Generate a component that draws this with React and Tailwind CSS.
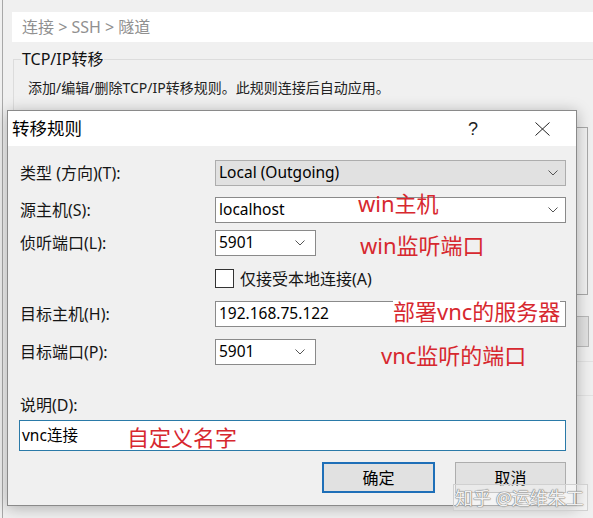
import React from "react";

function Chevron() {
  return (
    <svg width="10" height="6" viewBox="0 0 10 6" className="shrink-0">
      <path d="M0.5 0.5 L5 5 L9.5 0.5" fill="none" stroke="#555" strokeWidth="1" />
    </svg>
  );
}

function Row({ label, children, className = "" }) {
  return (
    <div className={`flex items-center ${className}`}>
      <div className="w-[207px] pl-[12px] text-[16px] text-[#151515] leading-none">{label}</div>
      {children}
    </div>
  );
}

export default function App() {
  return (
    <div className="relative w-[593px] h-[518px] overflow-hidden bg-[#f0f0f0] font-['Noto_Sans','Noto_Sans_CJK_SC',sans-serif]">
      {/* background window */}
      <div className="flex h-full">
        <div className="w-[2px]" />
        <div className="w-px bg-[#a8a8a8]" />
        <div className="flex-1 flex flex-col pt-[12px]">
          <div className="ml-[9px] h-[30px] bg-white flex items-center pl-[10px] text-[16px] text-[#909090]">
            连接 &gt; SSH &gt; 隧道
          </div>
          <fieldset className="ml-[10px] mt-[9px] border border-r-0 border-b-0 border-[#dcdcdc] pl-[14px] pb-0 min-w-0">
            <legend className="ml-[-7px] px-[1px] text-[16px] text-[#111] leading-none">TCP/IP转移</legend>
            <div className="mt-[14px] text-[14px] text-[#222] leading-none">添加/编辑/删除TCP/IP转移规则。此规则连接后自动应用。</div>
            <div className="flex mt-[32px] pr-[5px]">
              <div className="flex-1 h-[168px] border border-[#a8a8a8]" />
            </div>
            <div className="flex mt-[21px] pr-[4px]">
              <div className="flex-1 h-[31px] border border-[#b8b8b8] bg-[#e1e1e1]" />
            </div>
            <div className="mt-[14px] h-px bg-[#e2e2e2]" />
            <div className="mt-[33px] h-px bg-[#e2e2e2]" />
          </fieldset>
        </div>
      </div>

      {/* dialog */}
      <div className="absolute left-[7px] top-[110px] w-[570px] h-[396px] border border-[#8a8a8a] bg-[#f0f0f0] shadow-[0_2px_14px_rgba(0,0,0,0.28)] flex flex-col">
        <div className="h-[35px] bg-white flex items-center pl-[4px] shrink-0">
          <div className="text-[17.5px] text-black leading-none">转移规则</div>
          <div className="ml-auto w-[20px] text-center text-[18px] text-[#222] leading-none mr-[52px] font-['Liberation_Sans',sans-serif]">?</div>
          <svg width="15" height="14" viewBox="0 0 15 14" className="mr-[26px]">
            <path d="M0.5 0.5 L14.5 13.5 M14.5 0.5 L0.5 13.5" stroke="#222" strokeWidth="1" />
          </svg>
        </div>

        <Row label="类型 (方向)(T):" className="mt-[14px]">
          <div className="w-[351px] h-[26px] border border-[#adadad] bg-[#e1e1e1] flex items-center pl-[3px] pr-[7px] text-[15.5px] text-black">
            <span className="flex-1">Local (Outgoing)</span>
            <Chevron />
          </div>
        </Row>

        <Row label="源主机(S):" className="mt-[11px]">
          <div className="w-[351px] h-[26px] border border-[#8a8a8a] bg-white flex items-center pl-[3px] pr-[7px] text-[15.5px] text-black">
            <span className="flex-1">localhost</span>
            <Chevron />
          </div>
        </Row>

        <Row label="侦听端口(L):" className="mt-[7px]">
          <div className="w-[101px] h-[26px] border border-[#8a8a8a] bg-white flex items-center pl-[3px] pr-[10px] text-[15.5px] text-black">
            <span className="flex-1">5901</span>
            <Chevron />
          </div>
        </Row>

        <div className="flex items-center mt-[13px] pl-[207px]">
          <div className="w-[19px] h-[19px] border border-[#333] bg-white" />
          <span className="ml-[6px] text-[16px] text-[#151515] leading-none">仅接受本地连接(A)</span>
        </div>

        <Row label="目标主机(H):" className="mt-[13px]">
          <div className="w-[351px] h-[26px] border border-[#8a8a8a] bg-white flex items-center pl-[3px] text-[15.5px] text-black">
            192.168.75.122
          </div>
        </Row>

        <Row label="目标端口(P):" className="mt-[12px]">
          <div className="w-[101px] h-[26px] border border-[#8a8a8a] bg-white flex items-center pl-[3px] pr-[10px] text-[15.5px] text-black">
            <span className="flex-1">5901</span>
            <Chevron />
          </div>
        </Row>

        <div className="mt-[30px] pl-[12px] h-[20px] flex items-center text-[16px] text-[#151515] leading-none">说明(D):</div>

        <div className="mt-[5px] ml-[11px] w-[547px] h-[31px] border border-[#2a7aa8] bg-white flex items-center pl-[2px] text-[15.5px] text-black">
          vnc连接
        </div>

        <div className="mt-[11px] flex justify-end gap-[20px] pr-[10px]">
          <div className="w-[113px] h-[31px] border-2 border-[#1e6fb8] bg-[#e1e1e1] flex items-center justify-center text-[16px] text-black">确定</div>
          <div className="w-[111px] h-[31px] border border-[#adadad] bg-[#e1e1e1] flex items-center justify-center text-[16px] text-black">取消</div>
        </div>
      </div>

      {/* red annotations */}
      <div className="absolute inset-0 pointer-events-none text-[22px] leading-none text-[#d7282f]">
        <div className="absolute left-[358px] top-[192px]">win主机</div>
        <div className="absolute left-[360px] top-[234px]">win监听端口</div>
        <div className="absolute left-[393px] top-[300px] bg-white">部署vnc的服务器</div>
        <div className="absolute left-[381px] top-[344px]">vnc监听的端口</div>
        <div className="absolute left-[127px] top-[426px]">自定义名字</div>
      </div>

      {/* watermark */}
      <div className="absolute left-[453px] top-[484px] w-[135px] h-[27px] border border-[#d0d0d0] bg-white/30 flex items-center pl-[1px] whitespace-nowrap overflow-hidden text-[18px] leading-none text-white/90 [text-shadow:0_0_1px_#777,0_0_1px_#777,0_0_1px_#777]">
        知乎 @运维朱工
      </div>
    </div>
  );
}
